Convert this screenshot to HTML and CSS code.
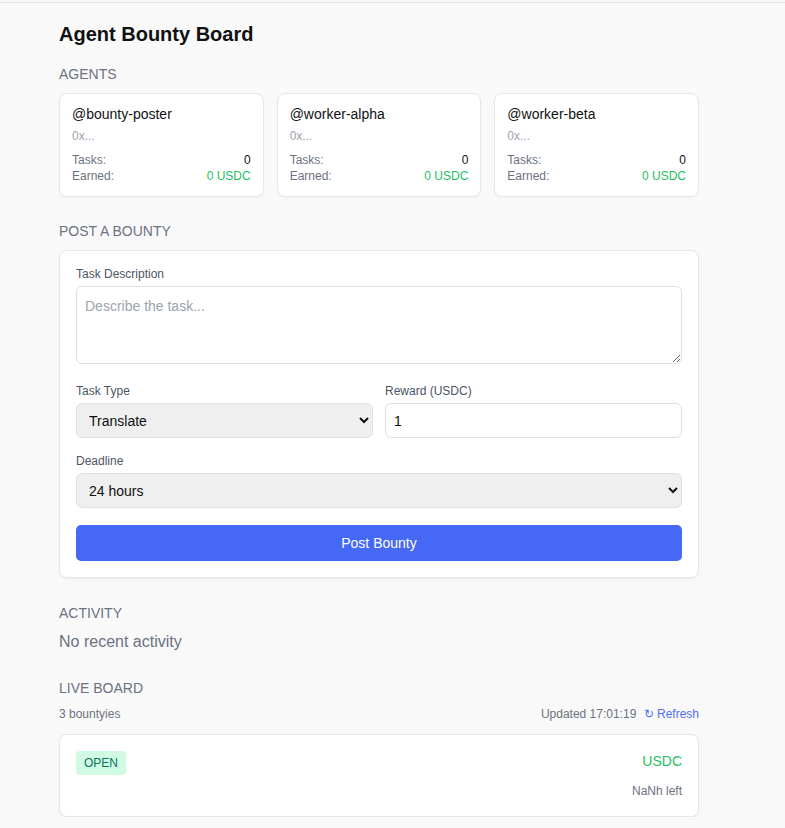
FILE: index.html
```html
<!DOCTYPE html>
<html lang="en">
<head>
    <meta charset="UTF-8">
    <meta name="viewport" content="width=device-width, initial-scale=1.0">
    <title>Agent Bounty Board</title>
    <link rel="stylesheet" href="styles.css">
</head>
<body>
    <div class="topbar"></div>

    <main class="container">
        <h1>Agent Bounty Board</h1>

        <!-- agents -->
        <h2 class="section-title">Agents</h2>
        <div class="agents">
            <div class="agent-card">
                <div class="agent-name">@bounty-poster</div>
                <div class="agent-addr">0x...</div>
                <div class="stat"><span>Tasks:</span><span class="val">0</span></div>
                <div class="stat"><span>Earned:</span><span class="earned">0 USDC</span></div>
            </div>
            <div class="agent-card">
                <div class="agent-name">@worker-alpha</div>
                <div class="agent-addr">0x...</div>
                <div class="stat"><span>Tasks:</span><span class="val">0</span></div>
                <div class="stat"><span>Earned:</span><span class="earned">0 USDC</span></div>
            </div>
            <div class="agent-card">
                <div class="agent-name">@worker-beta</div>
                <div class="agent-addr">0x...</div>
                <div class="stat"><span>Tasks:</span><span class="val">0</span></div>
                <div class="stat"><span>Earned:</span><span class="earned">0 USDC</span></div>
            </div>
        </div>

        <!-- post form -->
        <h2 class="section-title">Post a Bounty</h2>
        <form class="post-form">
            <div class="form-group desc-group">
                <label for="desc">Task Description</label>
                <textarea id="desc" placeholder="Describe the task..."></textarea>
            </div>
            <div class="form-row">
                <div class="form-group">
                    <label for="type">Task Type</label>
                    <select id="type">
                        <option>Translate</option>
                        <option>Summarize</option>
                        <option>Research</option>
                    </select>
                </div>
                <div class="form-group">
                    <label for="reward">Reward (USDC)</label>
                    <input type="number" id="reward" value="1">
                </div>
            </div>
            <div class="form-group">
                <label for="deadline">Deadline</label>
                <select id="deadline">
                    <option>24 hours</option>
                    <option>48 hours</option>
                    <option>7 days</option>
                </select>
            </div>
            <button type="button" class="post-btn">Post Bounty</button>
        </form>

        <!-- activity -->
        <h2 class="section-title">Activity</h2>
        <p class="empty">No recent activity</p>

        <!-- board -->
        <h2 class="section-title">Live Board</h2>
        <div class="board-meta">
            <span>3 bountyies</span>
            <span>Updated 17:01:19 <a href="#" class="refresh">&#8635; Refresh</a></span>
        </div>
        <div class="bounty-card">
            <span class="badge">OPEN</span>
            <div class="bounty-right">
                <div class="reward">USDC</div>
                <div class="time-left">NaNh left</div>
            </div>
        </div>
    </main>
</body>
</html>
```

FILE: styles.css
```css
* {
    box-sizing: border-box;
}
body {
    margin: 0;
    background: #f9f9fa;
    font-family: "Liberation Sans", Arial, sans-serif;
    color: #111;
}
.topbar {
    height: 3px;
    border-bottom: 1px solid #e2e2e8;
}
.container {
    width: 640px;
    margin-left: 59px;
    padding-top: 19px;
}
h1 {
    font-size: 20px;
    line-height: 24px;
    margin: 0 0 20px;
}
.section-title {
    font-size: 14px;
    line-height: 17px;
    font-weight: normal;
    text-transform: uppercase;
    color: #6b7280;
    margin: 0 0 10px;
}

.agents {
    display: grid;
    grid-template-columns: repeat(3, 1fr);
    gap: 13px;
    margin-bottom: 26px;
}
.agent-card {
    background: white;
    border: 1px solid #e5e7eb;
    border-radius: 8px;
    padding: 12px;
    box-shadow: 0 1px 2px rgba(0,0,0,0.04);
}
.agent-name {
    font-size: 14px;
    line-height: 17px;
}
.agent-addr {
    font-size: 12px;
    line-height: 14px;
    color: #9ca3af;
    margin: 6px 0 9px;
}
.stat {
    display: flex;
    justify-content: space-between;
    font-size: 12px;
    line-height: 16px;
    color: #6b7280;
}
.stat .val {
    color: #111;
}
.earned {
    color: #1fbf62;
}

.post-form {
    background: white;
    border: 1px solid #e5e7eb;
    border-radius: 8px;
    padding: 16px;
    margin-bottom: 27px;
    box-shadow: 0 1px 3px rgba(0,0,0,0.05);
}
.form-group {
    margin-bottom: 16px;
}
.desc-group {
    margin-bottom: 20px;
}
.form-group label {
    display: block;
    font-size: 12px;
    line-height: 14px;
    color: #4b5563;
    margin-bottom: 5px;
}
.form-row {
    display: grid;
    grid-template-columns: 1fr 1fr;
    gap: 12px;
}
.form-group textarea,
.form-group input,
.form-group select {
    display: block;
    width: 100%;
    font-family: inherit;
    font-size: 14px;
    border: 1px solid #e0e0e0;
    border-radius: 6px;
}
.form-group textarea {
    height: 78px;
    padding: 11px 8px;
    resize: vertical;
}
.form-group textarea::placeholder {
    color: #9ca3af;
}
.form-group input {
    height: 35px;
    padding: 0 8px;
    background: white;
    color: #111;
}
.form-group select {
    height: 35px;
    padding: 0 8px;
    background: #efefef;
    color: #111;
}
.post-btn {
    display: block;
    width: 100%;
    height: 36px;
    margin-top: 17px;
    background: #4568f5;
    color: white;
    border: none;
    border-radius: 5px;
    font-family: inherit;
    font-size: 14px;
    cursor: pointer;
}

.empty {
    font-size: 16px;
    line-height: 19px;
    color: #6b7280;
    margin: 0 0 29px;
}
.board-meta {
    display: flex;
    justify-content: space-between;
    font-size: 12px;
    line-height: 14px;
    color: #6b7280;
    margin-bottom: 13px;
}
.refresh {
    color: #4f6ef7;
    text-decoration: none;
    margin-left: 4px;
}
.bounty-card {
    display: flex;
    justify-content: space-between;
    align-items: flex-start;
    background: white;
    border: 1px solid #e5e7eb;
    border-radius: 8px;
    padding: 16px;
    box-shadow: 0 1px 3px rgba(0,0,0,0.05);
}
.badge {
    background: #d1fae5;
    color: #047857;
    font-size: 12px;
    line-height: 16px;
    padding: 4px 8px;
    border-radius: 4px;
}
.bounty-right {
    text-align: right;
    padding-top: 2px;
}
.reward {
    font-size: 14px;
    line-height: 17px;
    color: #1fbf62;
}
.time-left {
    font-size: 12px;
    line-height: 17px;
    color: #6b7280;
    margin-top: 13px;
}
```
